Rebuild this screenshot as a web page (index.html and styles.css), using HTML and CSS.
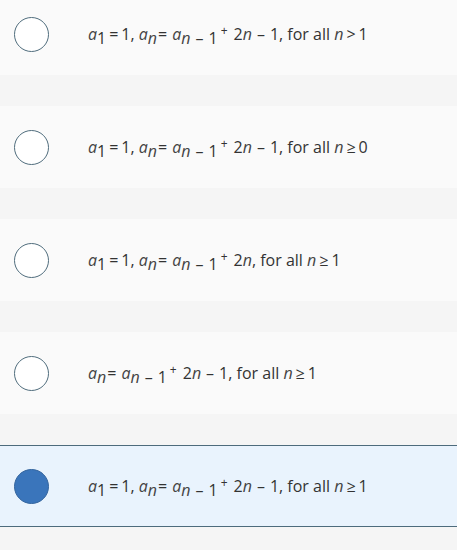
FILE: index.html
```html
<!DOCTYPE html>
<html>
<head>
<meta charset="utf-8">
<link rel="stylesheet" href="styles.css">
</head>
<body>
<div class="list">
  <div class="option first">
    <span class="radio"></span>
    <span class="math"><i>a</i><sub>1</sub><span class="op">=</span>1, <i>a</i><sub><i>n</i></sub><span class="eq">=</span><i>a</i><sub><i>n</i><span class="minus">–</span>1</sub><sup>+</sup>2<i>n</i><span class="minus">–</span>1, for all <i>n</i><span class="op">&gt;</span>1</span>
  </div>
  <div class="option">
    <span class="radio"></span>
    <span class="math"><i>a</i><sub>1</sub><span class="op">=</span>1, <i>a</i><sub><i>n</i></sub><span class="eq">=</span><i>a</i><sub><i>n</i><span class="minus">–</span>1</sub><sup>+</sup>2<i>n</i><span class="minus">–</span>1, for all <i>n</i><span class="op">≥</span>0</span>
  </div>
  <div class="option">
    <span class="radio"></span>
    <span class="math"><i>a</i><sub>1</sub><span class="op">=</span>1, <i>a</i><sub><i>n</i></sub><span class="eq">=</span><i>a</i><sub><i>n</i><span class="minus">–</span>1</sub><sup>+</sup>2<i>n</i>, for all <i>n</i><span class="op">≥</span>1</span>
  </div>
  <div class="option">
    <span class="radio"></span>
    <span class="math"><i>a</i><sub><i>n</i></sub><span class="eq">=</span><i>a</i><sub><i>n</i><span class="minus">–</span>1</sub><sup>+</sup>2<i>n</i><span class="minus">–</span>1, for all <i>n</i><span class="op">≥</span>1</span>
  </div>
  <div class="option selected">
    <span class="radio"></span>
    <span class="math"><i>a</i><sub>1</sub><span class="op">=</span>1, <i>a</i><sub><i>n</i></sub><span class="eq">=</span><i>a</i><sub><i>n</i><span class="minus">–</span>1</sub><sup>+</sup>2<i>n</i><span class="minus">–</span>1, for all <i>n</i><span class="op">≥</span>1</span>
  </div>
</div>
</body>
</html>
```
FILE: styles.css
```css
html, body {
  margin: 0;
  padding: 0;
  background: #f5f5f5;
}
.list {
  display: flex;
  flex-direction: column;
  gap: 31px;
  margin-top: -7px;
}
.option {
  height: 82px;
  box-sizing: border-box;
  background: #fafafa;
  display: flex;
  align-items: center;
  padding-left: 14px;
}
.option.selected {
  background: #e9f3fd;
  border-top: 1px solid #4d6b7c;
  border-bottom: 1px solid #4d6b7c;
}
.radio {
  width: 35px;
  height: 35px;
  box-sizing: border-box;
  border-radius: 50%;
  border: 1.5px solid #506d7d;
  background: #ffffff;
  flex: none;
}
.selected .radio {
  background: #3a75bb;
  border-color: #34659e;
}
.math {
  margin-left: 39px;
  font-family: "Open Sans", Lato, sans-serif;
  font-size: 16px;
  color: #333333;
  white-space: nowrap;
}
.math i {
  font-style: italic;
  color: #444444;
}
.math sub {
  font-size: 16px;
  vertical-align: -4px;
  line-height: 0;
}
.math sup {
  font-size: 12px;
  vertical-align: 5px;
  line-height: 0;
  margin: 0 6px 0 3px;
}
.op {
  margin: 0 3px;
}
.eq {
  margin: 0 5px 0 1px;
}
.minus {
  margin: 0 5px;
}
```
